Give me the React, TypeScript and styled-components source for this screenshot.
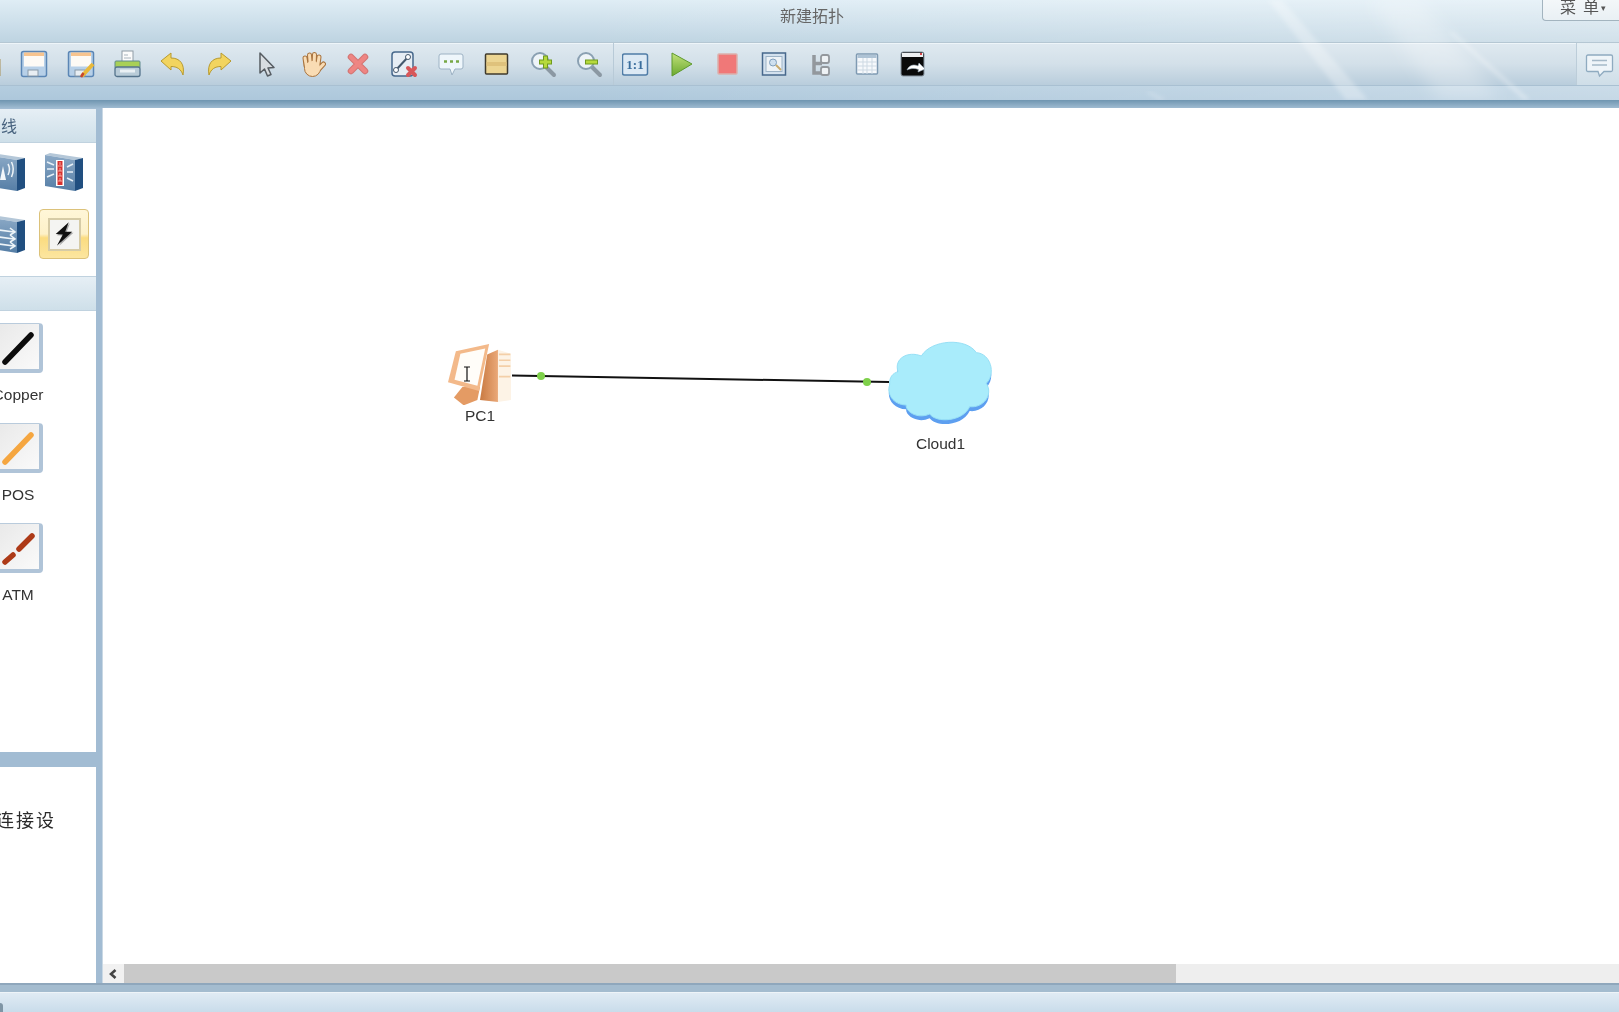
import React from "react";
import styled, { createGlobalStyle } from "styled-components";

const GlobalStyle = createGlobalStyle`
  html, body { margin: 0; padding: 0; background: #fff; overflow: hidden; }
  body { font-family: "Liberation Sans", "Noto Sans CJK SC", sans-serif; }
`;

const Page = styled.div`
  width: 1619px;
  height: 1012px;
  display: flex;
  flex-direction: column;
  overflow: hidden;
  filter: blur(0.4px);
`;

const Header = styled.header`
  position: relative;
  flex: none;
  display: flex;
  flex-direction: column;
  background: linear-gradient(90deg, rgba(255,255,255,0) 35%, rgba(255,255,255,.3) 100%), linear-gradient(180deg, #dfedf5 0, #bdd3e1 40%, #b4cddf 80%, #a9c4d9 100%);
`;

const Streaks = styled.svg`
  position: absolute;
  left: 0;
  top: 0;
  pointer-events: none;
`;

const TitleBar = styled.div`
  height: 42px;
  padding-left: 5px;
  display: grid;
  grid-template-columns: 1fr auto 1fr;
  box-sizing: border-box;
`;

const Title = styled.div`
  grid-column: 2;
  font: 16px/31px "Noto Sans CJK SC", sans-serif;
  color: #666;
`;

const MenuButton = styled.div`
  grid-column: 3;
  justify-self: end;
  align-self: start;
  width: 77px;
  height: 21px;
  box-sizing: border-box;
  padding-left: 17px;
  display: flex;
  gap: 7px;
  font: 16px/13px "Noto Sans CJK SC", sans-serif;
  color: #555;
  white-space: nowrap;
  background: linear-gradient(180deg, #f3f7f9, #e9f0f4);
  border: 1px solid #a3b4bf;
  border-top: 0;
  border-right: 0;
  border-bottom-left-radius: 4px;
`;

const MenuCaret = styled.span`
  margin-left: -5px;
  font-size: 9px;
  line-height: 15px;
`;

const Toolbar = styled.div`
  height: 44px;
  box-sizing: border-box;
  display: flex;
  justify-content: space-between;
  border-top: 1px solid #b5c7d3;
  border-bottom: 1px solid #a9c0d2;
  box-shadow: inset 0 1px 0 #eef5f9;
  background: linear-gradient(180deg, #dfe9f0 0, #d3e0e9 50%, #b9cddc 100%);
`;

const ToolRow = styled.div`
  display: flex;
  align-items: center;
  margin-left: -35px;
`;

const ToolCell = styled.div`
  width: 46.25px;
  flex: none;
  display: flex;
  justify-content: center;
  align-items: center;
`;

const ToolSep = styled.div`
  width: 1px;
  margin-right: -1px;
  align-self: stretch;
  background: #b8cad7;
`;

const CommentBox = styled.div`
  width: 43px;
  box-sizing: border-box;
  padding-left: 8px;
  display: flex;
  align-items: center;
  border-left: 1px solid #bccdd9;
  background: linear-gradient(180deg, #e6eff4, #cfdee8);
`;

const LowerStrip = styled.div`
  height: 14px;
`;

const DarkStrip = styled.div`
  height: 8px;
  background: linear-gradient(180deg, #6f95b0, #9fbbd1);
`;

const Body = styled.div`
  flex: none;
  height: 884px;
  display: flex;
  gap: 6px;
  padding-bottom: 9px;
  box-sizing: border-box;
  background: linear-gradient(0deg, #a4bccf 0, #a4bccf 7px, #8fa7bc 7px, #8fa7bc 9px, #a2bcd3 9px);
`;

const Sidebar = styled.aside`
  width: 96px;
  flex: none;
  display: flex;
  flex-direction: column;
  padding-top: 1px;
`;

const SideHeader = styled.div`
  height: 34px;
  flex: none;
  box-sizing: border-box;
  padding-left: 1px;
  font: 16px/32px "Noto Sans CJK SC", sans-serif;
  color: #47627e;
  background: linear-gradient(180deg, #e6eff5, #cedfe9);
  border-bottom: 1px solid #c0d2df;
`;

const DeviceSection = styled.div`
  height: 134px;
  flex: none;
  background: #fff;
  box-sizing: border-box;
  border-bottom: 1px solid #c0d2df;
  padding-top: 4px;
`;

const DeviceGrid = styled.div`
  display: grid;
  grid-template-columns: 50px 50px;
  grid-auto-rows: 50px;
  gap: 12px 8px;
  margin-left: -19px;
`;

const DeviceCell = styled.div`
  display: flex;
  align-items: center;
  justify-content: center;
`;

const SelectedTile = styled(DeviceCell)`
  box-sizing: border-box;
  border: 1px solid #dcc27a;
  border-radius: 4px;
  background: linear-gradient(180deg, #fff6d8 0, #fdf1c8 50%, #fbdc80 58%, #fce6a0 100%);
`;

const BoltFrame = styled.div`
  width: 33px;
  height: 33px;
  box-sizing: border-box;
  border: 2px solid #d6cba6;
  background: #f4f4f2;
  display: flex;
  align-items: center;
  justify-content: center;
`;

const CableSection = styled.div`
  height: 441px;
  flex: none;
  background: #fff;
  box-sizing: border-box;
  padding-top: 12px;
  display: flex;
  flex-direction: column;
  gap: 6px;
`;

const CableItem = styled.div`
  width: 50px;
  margin-left: -7px;
  height: 94px;
  display: flex;
  flex-direction: column;
  align-items: center;
`;

const CableTile = styled.div`
  width: 50px;
  height: 50px;
  flex: none;
  box-sizing: border-box;
  border: 1px solid #c5d4e1;
  border-right: 4px solid #b0c4d8;
  border-bottom: 4px solid #b0c4d8;
  border-top-color: #b9cbdc;
  border-radius: 4px;
  background: linear-gradient(135deg, #e8e8e8, #fafafa);
`;

const CableLabel = styled.div`
  margin-top: 13px;
  font-size: 15.5px;
  line-height: 18px;
  color: #333;
  white-space: nowrap;
`;

const SideGap = styled.div`
  height: 15px;
  flex: none;
`;

const HintSection = styled.div`
  flex: 1;
  background: #fff;
  overflow: hidden;
  padding-top: 40px;
`;

const HintText = styled.div`
  margin-left: -4px;
  font: 18px/24px "Noto Sans CJK SC", sans-serif;
  letter-spacing: 2px;
  color: #2a2a2a;
  white-space: nowrap;
`;

const CanvasPane = styled.main`
  flex: 1;
  min-width: 0;
  display: flex;
  flex-direction: column;
  background: #fff;
  border-left: 1px solid #c9d8e4;
`;

const Canvas = styled.div`
  position: relative;
  flex: 1;
  background: #fff;
`;

const Wire = styled.svg`
  position: absolute;
  left: 0;
  top: 0;
`;

const Node = styled.div<{ $x: number; $y: number }>`
  position: absolute;
  left: ${(p) => p.$x}px;
  top: ${(p) => p.$y}px;
  display: flex;
  flex-direction: column;
  align-items: center;
`;

const NodeLabel = styled.div<{ $gap: number }>`
  margin-top: ${(p) => p.$gap}px;
  font-size: 15.5px;
  line-height: 18px;
  color: #333;
`;

const ScrollBar = styled.div`
  height: 19px;
  flex: none;
  display: flex;
  background: #eeeeee;
`;

const ScrollArrow = styled.div`
  width: 21px;
  display: flex;
  align-items: center;
  justify-content: center;
  background: #f1f1f1;
`;

const ScrollThumb = styled.div`
  width: 1052px;
  background: #c9c9c9;
`;

const StatusBar = styled.footer`
  flex: none;
  height: 20px;
  display: flex;
  align-items: flex-end;
  border-top: 1px solid #eef4f8;
  box-sizing: border-box;
  background: linear-gradient(180deg, #e0ebf4, #c9dcea);
`;

const StatusGrip = styled.div`
  width: 3px;
  height: 9px;
  border-top-right-radius: 3px;
  background: #7f95a5;
`;

type IconProps = { children: React.ReactNode; size?: number };

const Ico = ({ children, size = 28 }: IconProps) => (
  <svg width={size} height={size} viewBox="0 0 28 28" fill="none">
    {children}
  </svg>
);

const Floppy = () => (
  <>
    <rect x="1.5" y="1.5" width="25" height="25" rx="2" fill="#b7d0e8" stroke="#5b86b5" strokeWidth="1.5" />
    <rect x="4" y="2.5" width="20" height="3.5" fill="#f7c48f" />
    <rect x="4" y="6" width="20" height="10.5" fill="#fdfaf5" />
    <rect x="8" y="20" width="10" height="6" fill="#e8eef3" stroke="#8a9aa8" />
  </>
);

const toolIcons: React.ReactNode[] = [
  <Ico key="open">
    <path d="M2 6h9l3 3h12v17H2z" fill="#d9bd7c" stroke="#a88f57" />
  </Ico>,
  <Ico key="save">
    <Floppy />
  </Ico>,
  <Ico key="saveas">
    <Floppy />
    <path d="M15 26l11-12" stroke="#e9b93a" strokeWidth="4" />
    <path d="M14 27l2.5-4" stroke="#c8452e" strokeWidth="2.5" />
  </Ico>,
  <Ico key="print">
    <rect x="9" y="1" width="11" height="12" fill="#fbfbfb" stroke="#8f9ca6" />
    <path d="M11 5h4M11 8h7" stroke="#a9b4bd" />
    <rect x="2" y="11" width="25" height="7" rx="1" fill="#a8d056" stroke="#5f8a8c" />
    <rect x="2" y="17" width="25" height="9.500" rx="2" fill="#b9ccd8" stroke="#54738c" strokeWidth="1.300" />
    <rect x="7" y="19.500" width="15" height="3" fill="#e9f0f4" />
  </Ico>,
  <Ico key="undo">
    <path d="M2 11L12 3V8C21 8 26 14 24 25C22 19 18 16.500 12 16.500V20Z" fill="#f2d45f" stroke="#b89a2e" strokeLinejoin="round" />
  </Ico>,
  <Ico key="redo">
    <path d="M26 11L16 3V8C7 8 2 14 4 25C6 19 10 16.500 16 16.500V20Z" fill="#f2d45f" stroke="#b89a2e" strokeLinejoin="round" />
  </Ico>,
  <Ico key="pointer">
    <path d="M8 3V23L12.500 19L15.500 26L19 24.500L16 18L22 17.500Z" fill="#d8dde1" stroke="#565c62" strokeWidth="1.500" strokeLinejoin="round" />
  </Ico>,
  <Ico key="hand">
    <g strokeLinecap="round" stroke="#a9743f" strokeWidth="5">
      <path d="M8 16L7 8M12 14L11.500 5M16 14L16.500 4.500M20 15L21 7M21 19L25.500 14" />
    </g>
    <ellipse cx="14.500" cy="18.500" rx="8" ry="8" fill="#f9dcb4" stroke="#a9743f" />
    <g strokeLinecap="round" stroke="#f9dcb4" strokeWidth="3">
      <path d="M8.500 17L7 8M12.500 17L11.500 5M16 17L16.500 4.500M19.500 17L21 7M20 20L25.500 14" />
    </g>
  </Ico>,
  <Ico key="delete">
    <path d="M7 7L21 21M21 7L7 21" stroke="#d27573" strokeWidth="6.500" strokeLinecap="round" />
    <path d="M7 7L21 21M21 7L7 21" stroke="#ee8583" strokeWidth="4.500" strokeLinecap="round" />
  </Ico>,
  <Ico key="dellink">
    <rect x="2" y="2" width="21" height="24" rx="3" fill="#e6edf4" stroke="#47688c" strokeWidth="1.500" />
    <path d="M6 20L18 7" stroke="#44586d" strokeWidth="2" />
    <circle cx="6" cy="20" r="2.500" fill="#fff" stroke="#44586d" />
    <circle cx="18" cy="7" r="2.500" fill="#fff" stroke="#44586d" />
    <path d="M18 18L25 25M25 18L18 25" stroke="#d8575a" strokeWidth="4" strokeLinecap="round" />
  </Ico>,
  <Ico key="note">
    <path d="M4 4H24Q26 4 26 6V17Q26 19 24 19H18L15 25L13 19H4Q2 19 2 17V6Q2 4 4 4Z" fill="#eef6fb" stroke="#9db2c4" />
    <path d="M7 11.500h3M13 11.500h3M19 11.500h3" stroke="#77a845" strokeWidth="2.500" />
  </Ico>,
  <Ico key="rect">
    <rect x="2.500" y="4" width="22" height="20" rx="1" fill="#ecd592" stroke="#3f3a2c" strokeWidth="1.500" />
    <rect x="3.500" y="12" width="20" height="4" fill="#dfc27c" />
  </Ico>,
  <Ico key="zoomin">
    <path d="M17 17L25 25" stroke="#8b98a3" strokeWidth="4" strokeLinecap="round" />
    <circle cx="11" cy="11" r="8" fill="#eef4f8" stroke="#8aa0b2" strokeWidth="2" />
    <path d="M10 12H23M16.500 5.500V18.500" stroke="#6f9a1e" strokeWidth="5" />
    <path d="M11 12H22M16.500 6.500V17.500" stroke="#b6d93c" strokeWidth="3" />
  </Ico>,
  <Ico key="zoomout">
    <path d="M17 17L25 25" stroke="#8b98a3" strokeWidth="4" strokeLinecap="round" />
    <circle cx="11" cy="11" r="8" fill="#eef4f8" stroke="#8aa0b2" strokeWidth="2" />
    <path d="M10 12H23" stroke="#6f9a1e" strokeWidth="5" />
    <path d="M11 12H22" stroke="#b6d93c" strokeWidth="3" />
  </Ico>,
  <Ico key="actual">
    <rect x="0.500" y="4" width="25" height="21" rx="2" fill="#dce9f4" stroke="#4f7ca6" strokeWidth="1.500" />
    <text x="13" y="19" textAnchor="middle" fontFamily="Liberation Serif, serif" fontWeight="700" fontSize="13" fill="#3a6d9c">
      1:1
    </text>
  </Ico>,
  <Ico key="play">
    <defs>
      <linearGradient id="playFill" x1="0" y1="0" x2="0" y2="1">
        <stop offset="0" stopColor="#c2e27a" />
        <stop offset="1" stopColor="#6aa82f" />
      </linearGradient>
    </defs>
    <path d="M4 3L24 14L4 26Z" fill="url(#playFill)" stroke="#5e9a2d" strokeLinejoin="round" />
  </Ico>,
  <Ico key="stop">
    <rect x="4" y="4" width="19" height="20" rx="1" fill="#f07878" stroke="#dcb0ac" strokeWidth="1.500" />
  </Ico>,
  <Ico key="shot">
    <rect x="2.500" y="3" width="23" height="22" fill="#d3e1ee" stroke="#47688c" strokeWidth="1.500" />
    <rect x="6" y="6.500" width="16" height="15" fill="#eef3f7" stroke="#9db3c6" />
    <circle cx="13" cy="12.500" r="3.500" fill="#cfe0ef" stroke="#7f9fbd" />
    <path d="M16 15L21 20" stroke="#c8ab6e" strokeWidth="2" />
  </Ico>,
  <Ico key="tree">
    <path d="M7 5V23H15M7 13.500H15" stroke="#93989d" strokeWidth="3.500" />
    <rect x="14" y="5" width="8" height="8" rx="2" fill="#eef2f5" stroke="#93989d" strokeWidth="1.800" />
    <rect x="14" y="17" width="8" height="8" rx="2" fill="#eef2f5" stroke="#93989d" strokeWidth="1.800" />
  </Ico>,
  <Ico key="table">
    <rect x="3.500" y="4" width="21" height="20" rx="1" fill="#f6f9fc" stroke="#7f9ab2" strokeWidth="1.500" />
    <rect x="4.500" y="5" width="19" height="3" fill="#aec3d5" />
    <path d="M4 12H24M4 16H24M4 20H24M10 8V24M14 8V24M19 8V24" stroke="#cdd9e3" />
  </Ico>,
  <Ico key="console">
    <rect x="2" y="2" width="23" height="24" rx="2" fill="#0a0a0a" stroke="#8794a0" />
    <rect x="3" y="3" width="21" height="4" fill="#eef0f2" />
    <path d="M21 4h2" stroke="#d8474a" strokeWidth="2" />
    <path d="M8 20C10 15 15 14 19 16L20 13L26 19L19 22L19.500 19.500C16 18 12 18 8 20Z" fill="#fff" stroke="#9db0bf" strokeWidth=".6" />
  </Ico>,
];

const DeviceBox = ({ children }: { children: React.ReactNode }) => (
  <svg width="40" height="40" viewBox="0 0 40 40">
    <defs>
      <linearGradient id="boxFront" x1="0" y1="0" x2="0" y2="1">
        <stop offset="0" stopColor="#8ba9c6" />
        <stop offset="1" stopColor="#557ea6" />
      </linearGradient>
    </defs>
    <path d="M1 3L6 1L39 6L31 8Z" fill="#b4c7d8" />
    <path d="M1 3L31 8V39L1 34Z" fill="url(#boxFront)" />
    <path d="M31 8L39 6V36L31 39Z" fill="#214f80" />
    {children}
  </svg>
);

const WifiBox = () => (
  <DeviceBox>
    <path d="M14 28L17 14L20 28Z" fill="#f3f7fa" />
    <path d="M22 12Q25 17 22 23M25.500 10Q29 17 25.500 25" stroke="#eef4f8" strokeWidth="1.500" fill="none" />
  </DeviceBox>
);

const FirewallBox = () => (
  <DeviceBox>
    <rect x="12" y="8" width="8" height="26" fill="#fff" />
    <rect x="13.500" y="9" width="5" height="24" fill="#d8312f" />
    <path d="M14 14h4M14 19h4M14 24h4M14 29h4M16 10v3M16 16v3M16 21v3M16 26v3" stroke="#f6c6bf" strokeWidth=".8" />
    <path d="M3 10L10 13M3 17H10M3 25L10 22M23 15L29 12M23 20H29M23 26L29 29" stroke="#e7f0f7" strokeWidth="1.600" />
  </DeviceBox>
);

const SwitchBox = () => (
  <DeviceBox>
    <path d="M6 15L28 18M6 22L28 25M6 29L28 32M24 14L29 18L24 21M24 21L29 25L24 28M24 28L29 32L24 35" stroke="#eef4f8" strokeWidth="1.600" fill="none" />
  </DeviceBox>
);

const Bolt = () => (
  <svg width="24" height="26" viewBox="0 0 20 22">
    <path d="M15 2L4 12L10 12.500L6 21L18 10L12 10Z" fill="#aaa" />
    <path d="M14 1L3 11L9 11.500L4 21L17 9L11 9Z" fill="#111" />
  </svg>
);

const CableLine = ({ color, dashed }: { color: string; dashed?: boolean }) => (
  <svg width="45" height="45" viewBox="0 0 45 45">
    <path
      d={dashed ? "M11 38L19 31M25 25L38 12" : "M11 38L37 11"}
      stroke={color}
      strokeWidth="5.500"
      strokeLinecap="round"
    />
  </svg>
);

const cables = [
  { label: "Copper", color: "#0c0c0c" },
  { label: "POS", color: "#f5a640" },
  { label: "ATM", color: "#ad3a17", dashed: true },
];

const PcIcon = () => (
  <svg width="68" height="62" viewBox="50 65 200 190">
    <defs>
      <linearGradient id="towerFill" x1="0" y1="0" x2="1" y2="0">
        <stop offset="0" stopColor="#c97a42" />
        <stop offset="1" stopColor="#eaa878" />
      </linearGradient>
    </defs>
    <path d="M205 86L245 98V240L205 246Z" fill="#fdf3e6" />
    <path d="M208 100H243M208 118H243M208 136H243M208 168H243" stroke="#f4cfa8" strokeWidth="5" />
    <path d="M172 100L205 86V246L150 240Z" fill="url(#towerFill)" />
    <path d="M96 200L150 200L142 240L100 256L70 232Z" fill="#e49b64" />
    <path d="M52 185L76 90L178 68L147 212Z" fill="#f3b98a" />
    <path d="M72 178L90 98L166 82L142 196Z" fill="#fffdf9" />
  </svg>
);

const CloudIcon = () => {
  const d =
    "M120 175C118 150 130 140 145 135C132 95 175 72 215 88C245 38 350 32 380 78C422 80 440 140 410 170C432 205 400 245 360 240C340 285 260 290 240 262C200 280 165 250 170 235C130 235 110 200 120 175Z";
  return (
    <svg width="107" height="88" viewBox="112 40 321 264">
      <path d={d} transform="translate(0 13)" fill="#5d9ff0" />
      <path d={d} fill="#a9ecfb" stroke="#97e0f6" strokeWidth="3" />
    </svg>
  );
};

const App = () => (
  <Page>
    <GlobalStyle />
    <Header>
      <TitleBar>
        <Title>新建拓扑</Title>
        <MenuButton>
          <span>菜</span>
          <span>单</span>
          <MenuCaret>▾</MenuCaret>
        </MenuButton>
      </TitleBar>
      <Toolbar>
        <ToolRow>
          {toolIcons.map((icon, i) => (
            <React.Fragment key={i}>
              {i === 14 && <ToolSep />}
              <ToolCell>{icon}</ToolCell>
            </React.Fragment>
          ))}
        </ToolRow>
        <CommentBox>
          <svg width="29" height="29" viewBox="0 0 29 29" fill="none">
            <path d="M3 5H26Q27.500 5 27.500 6.500V20Q27.500 21.500 26 21.500H19L14.500 26L13 21.500H3Q1.500 21.500 1.500 20V6.500Q1.500 5 3 5Z" fill="#eff5f9" stroke="#8fabc0" strokeWidth="1.300" />
            <path d="M7 10.500H22M7 15H22" stroke="#a5b9c8" strokeWidth="1.300" />
          </svg>
        </CommentBox>
      </Toolbar>
      <LowerStrip />
      <DarkStrip />
      <Streaks width="1619" height="100" viewBox="0 0 1619 100" aria-hidden="true">
        <defs>
          <filter id="soft">
            <feGaussianBlur stdDeviation="2" />
          </filter>
          <filter id="softer">
            <feGaussianBlur stdDeviation="8" />
          </filter>
        </defs>
        <path d="M1268 0L1282 0L1368 100L1346 100Z" fill="#fff" fillOpacity=".28" filter="url(#soft)" />
        <path d="M1370 0L1420 0L1500 100L1440 100Z" fill="#fff" fillOpacity=".25" filter="url(#softer)" />
        <path d="M1449 32L1453 32L1530 100L1524 100Z" fill="#fff" fillOpacity=".35" filter="url(#soft)" />
        <path d="M1146 92L1150 92L1166 100L1160 100Z" fill="#fff" fillOpacity=".3" filter="url(#soft)" />
      </Streaks>
    </Header>
    <Body>
      <Sidebar>
        <SideHeader>线</SideHeader>
        <DeviceSection>
          <DeviceGrid>
            <DeviceCell>
              <WifiBox />
            </DeviceCell>
            <DeviceCell>
              <FirewallBox />
            </DeviceCell>
            <DeviceCell>
              <SwitchBox />
            </DeviceCell>
            <SelectedTile>
              <BoltFrame>
                <Bolt />
              </BoltFrame>
            </SelectedTile>
          </DeviceGrid>
        </DeviceSection>
        <SideHeader />
        <CableSection>
          {cables.map((c) => (
            <CableItem key={c.label}>
              <CableTile>
                <CableLine color={c.color} dashed={c.dashed} />
              </CableTile>
              <CableLabel>{c.label}</CableLabel>
            </CableItem>
          ))}
        </CableSection>
        <SideGap />
        <HintSection>
          <HintText>连接设</HintText>
        </HintSection>
      </Sidebar>
      <CanvasPane>
        <Canvas>
          <Wire width="1516" height="856" viewBox="103 108 1516 856">
            <path d="M512 375.500L889 382" stroke="#111" strokeWidth="2" />
            <circle cx="541" cy="376" r="4" fill="#7ed04a" />
            <circle cx="867" cy="382" r="4" fill="#7ed04a" />
          </Wire>
          <Node $x={343} $y={235}>
            <PcIcon />
            <NodeLabel $gap={2}>PC1</NodeLabel>
          </Node>
          <Node $x={784} $y={232}>
            <CloudIcon />
            <NodeLabel $gap={7}>Cloud1</NodeLabel>
          </Node>
          <Wire width="1516" height="856" viewBox="103 108 1516 856">
            <path d="M464 367H470M467 367V381M464 381H470" stroke="#111" strokeWidth="1.200" />
          </Wire>
        </Canvas>
        <ScrollBar>
          <ScrollArrow>
            <svg width="12" height="12" viewBox="0 0 12 12">
              <path d="M7.500 2L3 6L7.500 10" stroke="#444" strokeWidth="2.600" fill="none" />
            </svg>
          </ScrollArrow>
          <ScrollThumb />
        </ScrollBar>
      </CanvasPane>
    </Body>
    <StatusBar>
      <StatusGrip />
    </StatusBar>
  </Page>
);

export default App;
